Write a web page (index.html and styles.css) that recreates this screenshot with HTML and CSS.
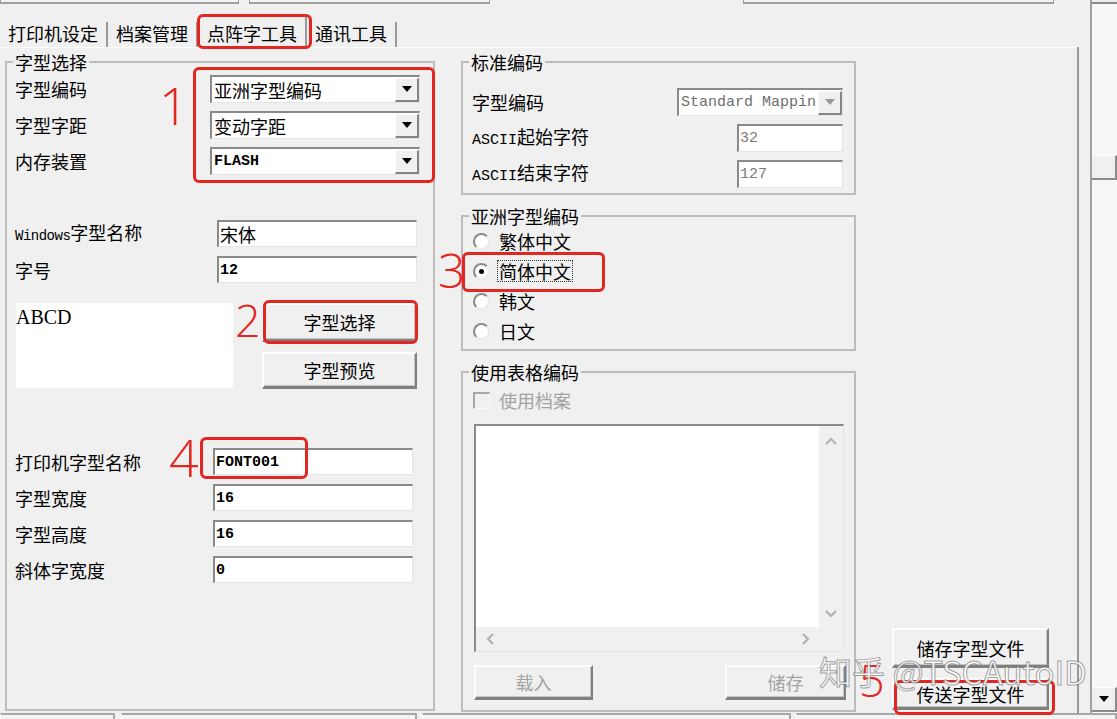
FILE: index.html
```html
<!DOCTYPE html>
<html lang="zh-CN">
<head>
    <meta charset="UTF-8">
    <title>点阵字工具</title>
    <link rel="stylesheet" href="styles.css">
</head>
<body>
<div class="window">
    <div class="frame">
        <div class="main">
            <div class="stubs-top">
                <div class="stub stub-1"></div>
                <div class="stub stub-2"></div>
                <div class="stub stub-3"></div>
            </div>

            <div class="tabs">
                <div class="tab">打印机设定</div>
                <div class="tab">档案管理</div>
                <div class="tab active">点阵字工具</div>
                <div class="tab">通讯工具</div>
            </div>

            <div class="page">
                <!-- left: font selection -->
                <fieldset class="group group-font">
                    <legend>字型选择</legend>
                    <div class="rows rows-select">
                        <div class="row">
                            <span class="label">字型编码</span>
                            <div class="combo"><span class="combo-value">亚洲字型编码</span><span class="drop"><i class="tri"></i></span></div>
                        </div>
                        <div class="row">
                            <span class="label">字型字距</span>
                            <div class="combo"><span class="combo-value">变动字距</span><span class="drop"><i class="tri"></i></span></div>
                        </div>
                        <div class="row">
                            <span class="label">内存装置</span>
                            <div class="combo"><span class="combo-value latin">FLASH</span><span class="drop"><i class="tri"></i></span></div>
                        </div>
                    </div>

                    <div class="rows rows-win">
                        <div class="row">
                            <span class="label"><span class="latin-sm">Windows</span>字型名称</span>
                            <input class="field cjk" type="text" value="宋体">
                        </div>
                        <div class="row">
                            <span class="label">字号</span>
                            <input class="field" type="text" value="12">
                        </div>
                    </div>

                    <div class="preview-row">
                        <div class="preview">ABCD</div>
                        <div class="preview-buttons">
                            <button class="btn btn-pick">字型选择</button>
                            <button class="btn btn-view">字型预览</button>
                        </div>
                    </div>

                    <div class="rows rows-printer">
                        <div class="row">
                            <span class="label">打印机字型名称</span>
                            <input class="field" type="text" value="FONT001">
                        </div>
                        <div class="row">
                            <span class="label">字型宽度</span>
                            <input class="field" type="text" value="16">
                        </div>
                        <div class="row">
                            <span class="label">字型高度</span>
                            <input class="field" type="text" value="16">
                        </div>
                        <div class="row">
                            <span class="label">斜体字宽度</span>
                            <input class="field" type="text" value="0">
                        </div>
                    </div>
                </fieldset>

                <!-- middle: encodings -->
                <div class="col-right">
                    <fieldset class="group group-std">
                        <legend>标准编码</legend>
                        <div class="rows rows-std">
                            <div class="row">
                                <span class="label">字型编码</span>
                                <div class="combo combo-off"><span class="combo-value latin">Standard Mappin</span><span class="drop"><i class="tri"></i></span></div>
                            </div>
                            <div class="row">
                                <span class="label"><span class="latin-md">ASCII</span>起始字符</span>
                                <input class="field field-sm" type="text" value="32" disabled>
                            </div>
                            <div class="row">
                                <span class="label"><span class="latin-md">ASCII</span>结束字符</span>
                                <input class="field field-sm" type="text" value="127" disabled>
                            </div>
                        </div>
                    </fieldset>

                    <fieldset class="group group-asia">
                        <legend>亚洲字型编码</legend>
                        <div class="radio"><span class="dot"></span><span>繁体中文</span></div>
                        <div class="radio checked"><span class="dot"></span><span class="focus">简体中文</span></div>
                        <div class="radio"><span class="dot"></span><span>韩文</span></div>
                        <div class="radio"><span class="dot"></span><span>日文</span></div>
                    </fieldset>

                    <fieldset class="group group-table">
                        <legend>使用表格编码</legend>
                        <div class="check"><span class="box"></span><span>使用档案</span></div>
                        <div class="listbox">
                            <div class="list-area"></div>
                            <div class="list-vbar">
                                <svg width="14" height="10" viewBox="0 0 14 10"><path d="M2 8 L7 3 L12 8" fill="none" stroke="#b0b0b0" stroke-width="2"/></svg>
                                <svg width="14" height="10" viewBox="0 0 14 10"><path d="M2 2 L7 7 L12 2" fill="none" stroke="#b0b0b0" stroke-width="2"/></svg>
                            </div>
                            <div class="list-hbar">
                                <svg width="10" height="14" viewBox="0 0 10 14"><path d="M8 2 L3 7 L8 12" fill="none" stroke="#b0b0b0" stroke-width="2"/></svg>
                                <svg width="10" height="14" viewBox="0 0 10 14"><path d="M2 2 L7 7 L2 12" fill="none" stroke="#b0b0b0" stroke-width="2"/></svg>
                            </div>
                            <div class="list-corner"></div>
                        </div>
                        <div class="table-buttons">
                            <button class="btn btn-load" disabled>载入</button>
                            <button class="btn btn-store" disabled>储存</button>
                        </div>
                    </fieldset>
                </div>

                <!-- right: file actions -->
                <div class="col-actions">
                    <button class="btn btn-save">储存字型文件</button>
                    <button class="btn btn-send">传送字型文件</button>
                </div>
            </div>
        </div>

        <div class="vscroll">
            <div class="vs-top"></div>
            <div class="vs-thumb"></div>
            <div class="vs-down"><i class="tri"></i></div>
        </div>
    </div>

    <div class="stubs-bottom">
        <div class="bstub bstub-1"></div>
        <div class="bstub bstub-2"></div>
        <div class="bstub bstub-3"></div>
        <div class="bstub bstub-4"></div>
    </div>

    <!-- red annotations -->
    <div class="mark mark-tab"></div>
    <div class="mark mark-1"></div>
    <div class="mark mark-2"></div>
    <div class="mark mark-3"></div>
    <div class="mark mark-4"></div>
    <div class="mark mark-5"></div>
    <div class="num num-1">1</div>
    <div class="num num-2">2</div>
    <div class="num num-3">3</div>
    <div class="num num-4">4</div>
    <div class="num num-5">5</div>

    <div class="watermark">知乎 @TSCAutoID</div>
</div>
</body>
</html>
```

FILE: styles.css
```css
* {
    box-sizing: border-box;
}
body {
    margin: 0;
    background: #f0f0f0;
    font-family: "Noto Sans CJK SC", "Noto Sans", sans-serif;
    font-size: 18px;
    line-height: 20px;
    color: #000;
}
.window {
    position: relative;
    width: 1117px;
    height: 719px;
    overflow: hidden;
    display: flex;
    flex-direction: column;
    background: #f0f0f0;
}
.frame {
    display: flex;
    height: 713px;
}
.main {
    width: 1090px;
    display: flex;
    flex-direction: column;
}

/* cut-off controls at the top and bottom edge */
.stubs-top {
    height: 4px;
    display: flex;
}
.stub {
    height: 4px;
    border: 1px solid #a0a0a0;
    border-top: none;
    border-bottom-width: 2px;
    background: #f4f4f4;
}
.stub-1 { width: 239px; }
.stub-2 { width: 241px; margin-left: 10px; }
.stub-3 { width: 311px; margin-left: 253px; }

.stubs-bottom {
    height: 6px;
    display: flex;
}
.bstub {
    height: 6px;
    border-top: 2px solid #a8a8a8;
    border-left: 1px solid #fff;
    border-right: 2px solid #a8a8a8;
    background: #f4f4f4;
}
.bstub-1 { width: 115px; }
.bstub-2 { width: 296px; margin-left: 6px; }
.bstub-3 { width: 369px; margin-left: 5px; }
.bstub-4 { width: 321px; margin-left: 5px; }

/* tabs */
.tabs {
    height: 43px;
    display: flex;
    align-items: flex-end;
}
.tab {
    height: 25px;
    padding: 0 8px;
    border-right: 2px solid #9a9a9a;
    line-height: 22px;
    white-space: nowrap;
}
.tab.active {
    height: 31px;
    padding: 6px 8px 0 9px;
}

/* tab page */
.page {
    width: 1079px;
    height: 666px;
    display: flex;
    padding: 5px 0 1px 5px;
    border-right: 2px solid #9a9a9a;
    box-shadow: inset 0 1px 0 #fff;
}

.group {
    margin: 0;
    padding: 0;
    min-width: 0;
    border: 2px solid #bcbcbc;
}
.group legend {
    margin-left: 6px;
    padding: 0 2px;
    height: 20px;
    line-height: 20px;
}

.rows {
    display: flex;
    flex-direction: column;
}
.row {
    display: flex;
    align-items: center;
}
.label {
    white-space: nowrap;
}
.latin {
    font-family: "Liberation Mono", monospace;
    font-size: 15px;
}
.latin-sm {
    font-family: "Liberation Mono", monospace;
    font-size: 14px;
    letter-spacing: -0.5px;
}
.latin-md {
    font-family: "Liberation Mono", monospace;
    font-size: 15px;
}

/* sunken edit box */
.field {
    height: 27px;
    margin: 0;
    padding: 0 1px;
    background: #fff;
    border-style: solid;
    border-width: 2px 1px 1px 2px;
    border-color: #8a8a8a #e4e4e4 #e4e4e4 #8a8a8a;
    font-family: "Liberation Mono", monospace;
    font-size: 15px;
    font-weight: bold;
    color: #000;
    outline: none;
}
.field.cjk {
    font-family: "Noto Sans CJK SC", sans-serif;
    font-size: 18px;
    font-weight: normal;
}
.field:disabled {
    color: #7a7a7a;
    font-weight: normal;
    background: #fff;
}

/* combo box */
.combo {
    height: 28px;
    display: flex;
    align-items: center;
    background: #fff;
    border-style: solid;
    border-width: 2px 1px 1px 2px;
    border-color: #8a8a8a #e4e4e4 #e4e4e4 #8a8a8a;
}
.combo-value {
    flex: 1;
    padding-left: 2px;
    line-height: 20px;
    white-space: nowrap;
}
.combo-value.latin {
    font-weight: bold;
}
.drop {
    width: 24px;
    height: 24px;
    display: flex;
    align-items: center;
    justify-content: center;
    background: #f0f0f0;
    border-style: solid;
    border-width: 1px 2px 2px 1px;
    border-color: #fdfdfd #858585 #858585 #fdfdfd;
}
.tri {
    display: block;
    width: 0;
    height: 0;
    border-left: 5px solid transparent;
    border-right: 5px solid transparent;
    border-top: 6px solid #000;
}
.combo-off .combo-value {
    color: #6e6e6e;
    font-weight: normal;
}
.combo-off .tri {
    border-top-color: #9a9a9a;
}

/* buttons */
.btn {
    margin: 0;
    padding: 0;
    background: #f0f0f0;
    border-style: solid;
    border-width: 2px 2px 3px 2px;
    border-color: #fdfdfd #808080 #808080 #fdfdfd;
    box-shadow: inset -1px -1px 0 #c4c4c4;
    font-family: "Noto Sans CJK SC", sans-serif;
    font-size: 18px;
    line-height: 20px;
    color: #000;
}
.btn:disabled {
    color: #a3a3a3;
}

/* left group */
.group-font {
    width: 430px;
    height: 659px;
}
.group-font .rows,
.group-font .preview-row {
    padding-left: 8px;
}
.rows-select {
    margin-top: 3px;
    gap: 8px;
}
.rows-select .label { width: 195px; }
.rows-select .combo { width: 210px; }

.rows-win {
    margin-top: 45px;
    gap: 9px;
}
.rows-win .label { width: 202px; }
.rows-win .field { width: 200px; }

.preview-row {
    margin-top: 20px;
    display: flex;
}
.preview {
    width: 217px;
    height: 85px;
    margin-left: 1px;
    padding-top: 3px;
    background: #fff;
    font-family: "Liberation Serif", serif;
    font-size: 20px;
    line-height: 22px;
}
.preview-buttons {
    margin-left: 29px;
    width: 155px;
    display: flex;
    flex-direction: column;
    gap: 10px;
}
.btn-pick { height: 39px; }
.btn-view { height: 37px; }

.rows-printer {
    margin-top: 59px;
    gap: 9px;
}
.rows-printer .label { width: 198px; }
.rows-printer .field { width: 200px; }

/* middle column */
.col-right {
    width: 395px;
    margin-left: 26px;
    display: flex;
    flex-direction: column;
}
.group-std {
    padding-bottom: 5px;
}
.rows-std {
    margin-top: 16px;
    padding: 0 11px 0 9px;
    gap: 8px;
}
.rows-std .row {
    justify-content: space-between;
}
.rows-std .combo { width: 166px; }
.field-sm { width: 106px; height: 28px; }

.group-asia {
    margin-top: 11px;
    padding-bottom: 3px;
}
.radio {
    height: 30px;
    padding-left: 10px;
    display: flex;
    align-items: center;
    gap: 9px;
}
.dot {
    width: 17px;
    height: 17px;
    border-radius: 50%;
    border-style: solid;
    border-width: 2px;
    border-color: #8a8a8a #eaeaea #eaeaea #8a8a8a;
    background: #fff;
    display: flex;
    align-items: center;
    justify-content: center;
}
.radio.checked .dot::after {
    content: "";
    width: 5px;
    height: 5px;
    border-radius: 50%;
    background: #000;
}
.focus {
    margin-left: -2px;
    padding: 0 1px;
    border: 1px dotted #333;
}

.group-table {
    flex: 1;
    margin-top: 11px;
}
.check {
    height: 24px;
    margin-top: 6px;
    padding-left: 10px;
    display: flex;
    align-items: center;
    gap: 9px;
    color: #a3a3a3;
}
.box {
    width: 17px;
    height: 17px;
    border-style: solid;
    border-width: 2px 1px 1px 2px;
    border-color: #a8a8a8 #f8f8f8 #f8f8f8 #a8a8a8;
    background: #f0f0f0;
}
.listbox {
    width: 370px;
    height: 228px;
    margin: 12px 0 0 11px;
    display: grid;
    grid-template-columns: 1fr 24px;
    grid-template-rows: 1fr 24px;
    border-style: solid;
    border-width: 2px 1px 1px 2px;
    border-color: #8a8a8a #e4e4e4 #e4e4e4 #8a8a8a;
    background: #fff;
}
.list-vbar {
    background: #f0f0f0;
    display: flex;
    flex-direction: column;
    justify-content: space-between;
    align-items: center;
    padding: 10px 0 8px;
}
.list-hbar {
    background: #f0f0f0;
    display: flex;
    justify-content: space-between;
    align-items: center;
    padding: 0 8px 0 9px;
}
.list-corner {
    background: #f0f0f0;
}
.table-buttons {
    margin-top: 13px;
    padding: 0 8px 0 11px;
    display: flex;
    justify-content: space-between;
}
.btn-load { width: 119px; height: 35px; }
.btn-store { width: 121px; height: 35px; }

/* action column */
.col-actions {
    width: 157px;
    margin-left: 36px;
    padding-bottom: 2px;
    display: flex;
    flex-direction: column;
    justify-content: flex-end;
    gap: 10px;
}
.btn-save { height: 40px; }
.btn-send { height: 32px; }

/* window scrollbar */
.vscroll {
    width: 27px;
    display: flex;
    flex-direction: column;
    border-left: 2px solid #a0a0a0;
    background: #f7f7f7;
}
.vs-top {
    height: 4px;
    border-bottom: 2px solid #8a8a8a;
    background: #ececec;
}
.vs-thumb {
    height: 25px;
    margin-top: 151px;
    background: #f0f0f0;
    border-top: 1px solid #fff;
    border-right: 2px solid #8a8a8a;
    border-bottom: 2px solid #8a8a8a;
}
.vs-down {
    height: 25px;
    margin-top: auto;
    margin-bottom: 1px;
    display: flex;
    align-items: center;
    justify-content: center;
    background: #f0f0f0;
    border-top: 1px solid #fff;
    border-right: 2px solid #8a8a8a;
    border-bottom: 2px solid #8a8a8a;
}

/* annotations drawn over the screenshot */
.mark {
    position: absolute;
    border: 3px solid #e3261f;
    border-radius: 6px;
}
.mark-tab { left: 197px; top: 14px; width: 115px; height: 35px; }
.mark-1 { left: 193px; top: 67px; width: 242px; height: 116px; }
.mark-2 { left: 263px; top: 300px; width: 155px; height: 44px; }
.mark-3 { left: 462px; top: 252px; width: 143px; height: 40px; }
.mark-4 { left: 200px; top: 437px; width: 108px; height: 42px; }
.mark-5 { left: 894px; top: 680px; width: 161px; height: 35px; }

.num {
    position: absolute;
    color: #e3261f;
    font-family: "Open Sans", "Liberation Sans", sans-serif;
    font-weight: 300;
    line-height: 1;
}
.num-1 { left: 159px; top: 79px; font-size: 52px; }
.num-2 { left: 235px; top: 297px; font-size: 45px; }
.num-3 { left: 438px; top: 246px; font-size: 48px; }
.num-4 { left: 169px; top: 431px; font-size: 52px; }
.num-5 { left: 859px; top: 657px; font-size: 45px; }

.watermark {
    position: absolute;
    left: 819px;
    top: 655px;
    font-size: 33px;
    line-height: 1;
    white-space: nowrap;
    color: rgba(255, 255, 255, 0.85);
    -webkit-text-stroke: 1px rgba(100, 100, 100, 0.6);
}
```
